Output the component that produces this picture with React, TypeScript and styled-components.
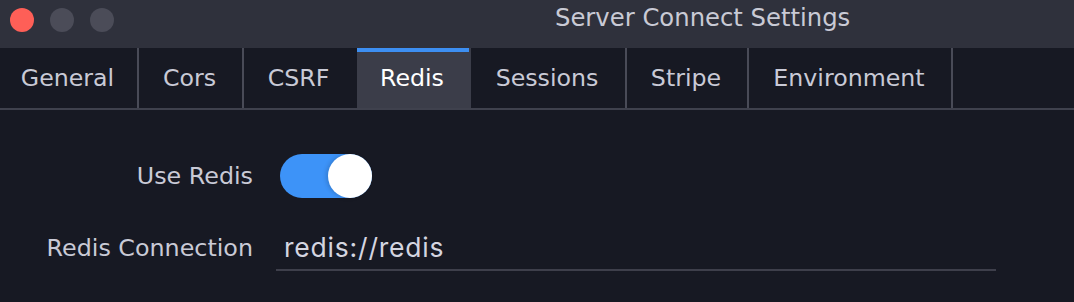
import React from 'react';
import styled, { createGlobalStyle } from 'styled-components';

const GlobalStyle = createGlobalStyle`
  html, body {
    margin: 0;
    padding: 0;
    background: #171923;
  }
  body {
    font-family: "DejaVu Sans", Verdana, sans-serif;
    -webkit-font-smoothing: antialiased;
  }
`;

const Window = styled.div`
  width: 1074px;
  height: 302px;
  display: flex;
  flex-direction: column;
  background: #171923;
  overflow: hidden;
`;

const TitleBar = styled.div`
  height: 48px;
  flex-shrink: 0;
  display: flex;
  align-items: flex-start;
  background: #2f313c;
  padding-left: 10px;
  box-sizing: border-box;
`;

const Lights = styled.div`
  display: flex;
  gap: 16px;
  margin-top: 8px;
`;

const Light = styled.span<{ $color: string }>`
  width: 24px;
  height: 24px;
  border-radius: 50%;
  background: ${(p) => p.$color};
`;

const Title = styled.div`
  margin-left: 441px;
  margin-top: 4px;
  font-size: 24.3px;
  line-height: 28px;
  color: #c9cad5;
  white-space: nowrap;
`;

const TabBar = styled.div`
  height: 62px;
  flex-shrink: 0;
  display: flex;
  box-sizing: border-box;
  border-bottom: 2px solid #3f414d;
`;

const Tab = styled.div<{ $width: number; $active?: boolean; $noDivider?: boolean }>`
  width: ${(p) => p.$width}px;
  box-sizing: border-box;
  display: flex;
  align-items: center;
  justify-content: center;
  padding-right: 2px;
  font-size: 23.7px;
  color: ${(p) => (p.$active ? '#ffffff' : '#c9cad6')};
  background: ${(p) => (p.$active ? '#3b3d49' : 'transparent')};
  box-shadow: ${(p) => (p.$active ? 'inset 0 4px 0 #3d8ff2' : 'none')};
  border-right: 2px solid ${(p) => (p.$noDivider ? 'transparent' : '#494b57')};
  white-space: nowrap;
`;

const Form = styled.div`
  display: grid;
  grid-template-columns: 253px 720px;
  column-gap: 23px;
  row-gap: 26px;
  align-items: center;
  padding-top: 44px;
`;

const Label = styled.div`
  text-align: right;
  font-size: 23.8px;
  color: #c9cad6;
  white-space: nowrap;
`;

const Switch = styled.div<{ $on: boolean }>`
  margin-left: 4px;
  width: 92px;
  height: 44px;
  border-radius: 22px;
  background: ${(p) => (p.$on ? '#3d93f8' : '#4a4c58')};
  display: flex;
  justify-content: ${(p) => (p.$on ? 'flex-end' : 'flex-start')};
`;

const Knob = styled.span`
  width: 44px;
  height: 44px;
  border-radius: 50%;
  background: #ffffff;
  box-shadow: -2px 0 4px rgba(0, 0, 0, 0.15);
`;

const TextInput = styled.input`
  width: 100%;
  height: 47px;
  box-sizing: border-box;
  padding: 0 0 0 8px;
  background: transparent;
  border: none;
  border-bottom: 2px solid #3e3f4b;
  outline: none;
  font-family: Inter, "Liberation Sans", sans-serif;
  font-size: 26.5px;
  letter-spacing: 0.8px;
  color: #d4d5e0;
`;

const tabs = [
  { name: 'General', width: 139 },
  { name: 'Cors', width: 105 },
  { name: 'CSRF', width: 113 },
  { name: 'Redis', width: 114 },
  { name: 'Sessions', width: 156 },
  { name: 'Stripe', width: 122 },
  { name: 'Environment', width: 204 },
];
const active = 'Redis';

const App = () => {
  const activeIndex = tabs.findIndex((t) => t.name === active);
  return (
    <Window>
      <GlobalStyle />
      <TitleBar>
        <Lights>
          <Light $color="#fe5f57" />
          <Light $color="#4b4c58" />
          <Light $color="#4b4c58" />
        </Lights>
        <Title>Server Connect Settings</Title>
      </TitleBar>
      <TabBar>
        {tabs.map((t, i) => (
          <Tab
            key={t.name}
            $width={t.width}
            $active={t.name === active}
            $noDivider={i === activeIndex || i === activeIndex - 1}
          >
            {t.name}
          </Tab>
        ))}
      </TabBar>
      <Form>
        <Label>Use Redis</Label>
        <Switch $on>
          <Knob />
        </Switch>
        <Label>Redis Connection</Label>
        <TextInput defaultValue="redis://redis" />
      </Form>
    </Window>
  );
};

export default App;
